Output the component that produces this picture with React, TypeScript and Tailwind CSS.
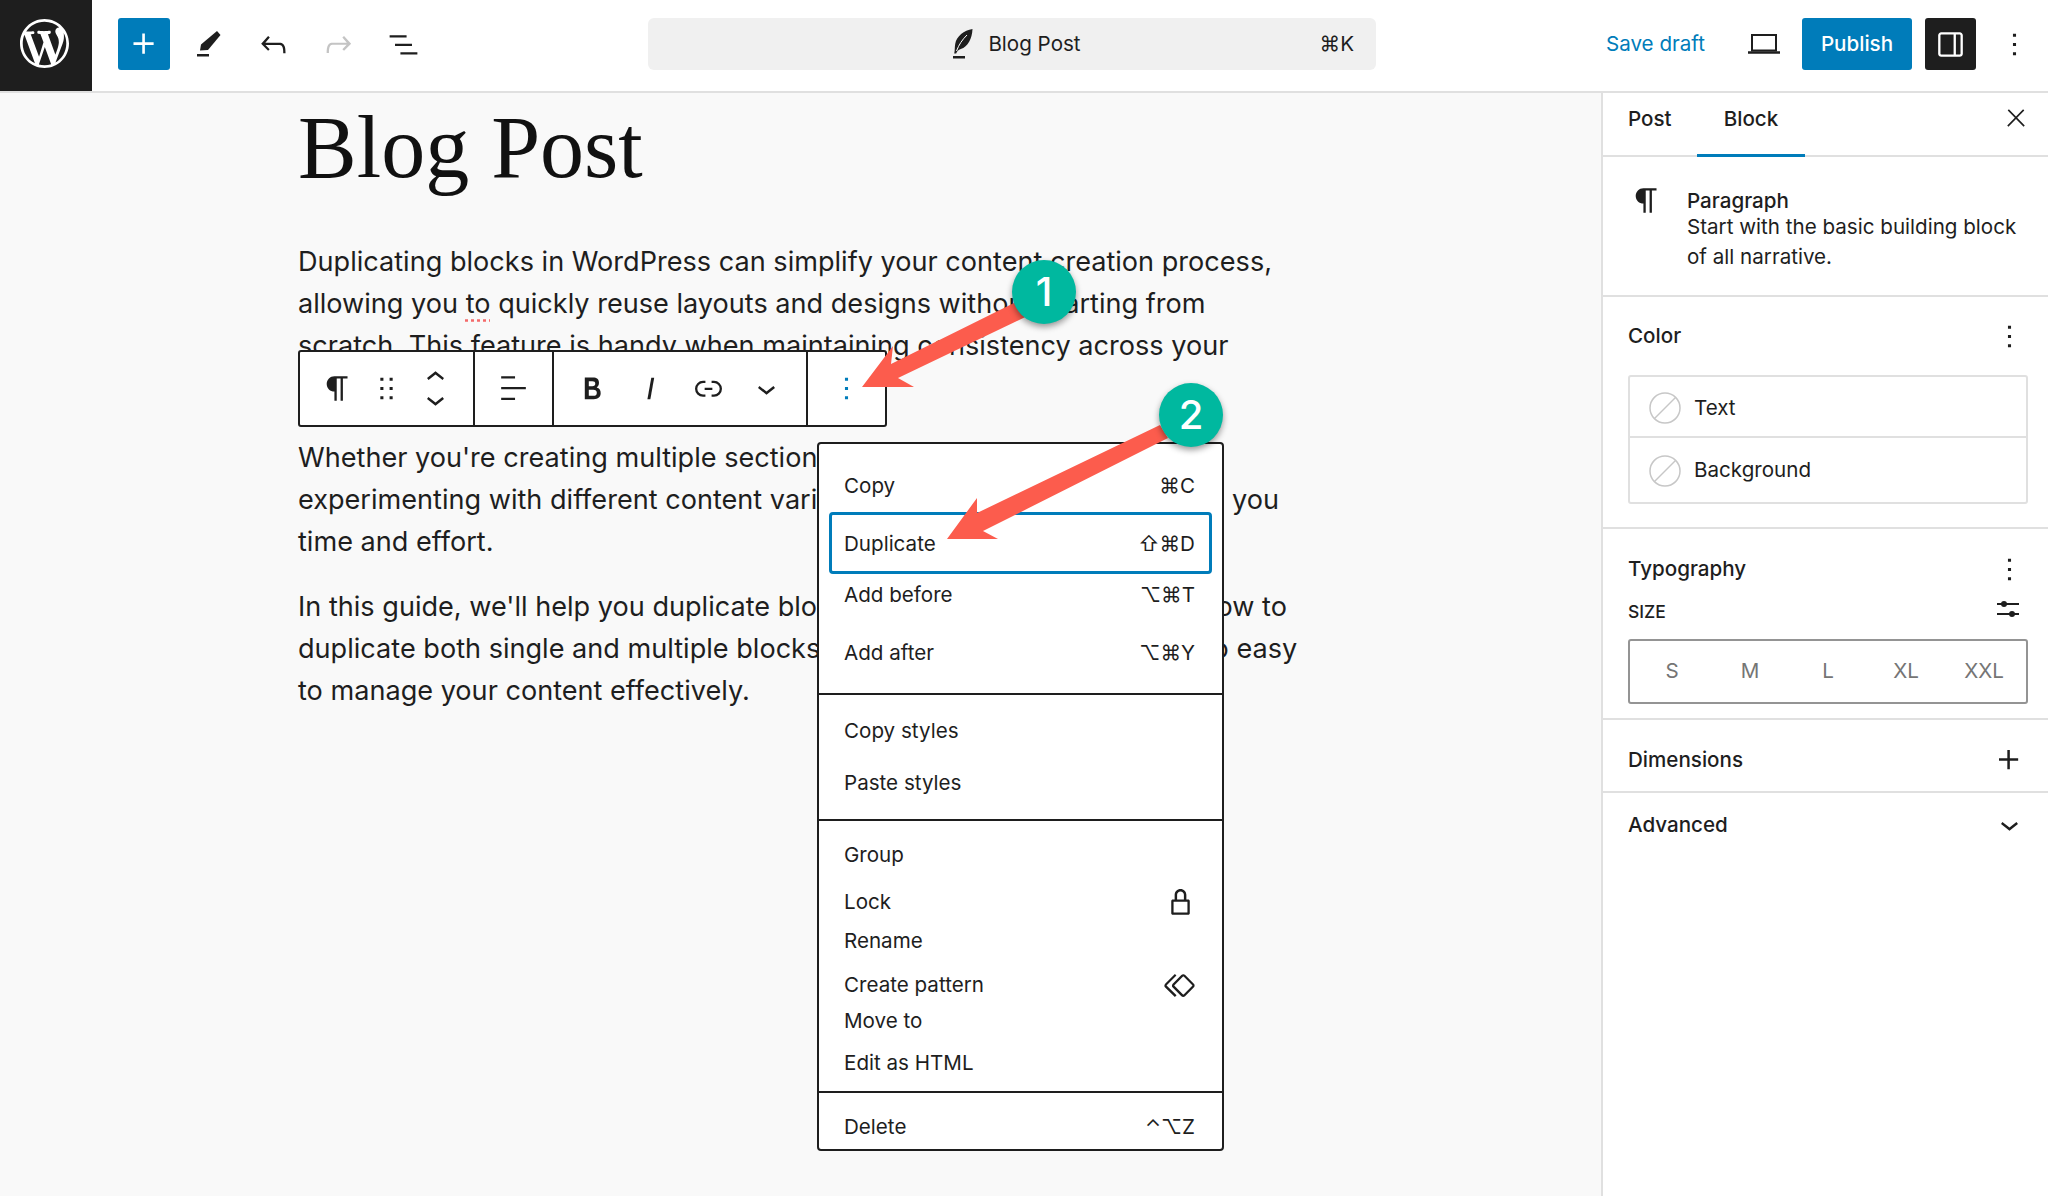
import type { ReactNode } from 'react';

const paths = {
  wordpress:
    'M20 10c0-5.51-4.49-10-10-10C4.48 0 0 4.49 0 10c0 5.52 4.48 10 10 10 5.51 0 10-4.48 10-10zM7.78 15.37L4.37 6.22c.55-.02 1.17-.08 1.17-.08.5-.06.44-1.13-.06-1.11 0 0-1.45.11-2.37.11-.18 0-.37 0-.58-.01C4.12 2.69 6.87 1.11 10 1.11c2.33 0 4.45.87 6.05 2.34-.68-.11-1.65.39-1.65 1.58 0 .74.45 1.36.9 2.1.35.61.55 1.36.55 2.46 0 1.49-1.4 5-1.4 5l-3.03-8.37c.54-.02.82-.17.82-.17.5-.05.44-1.25-.06-1.22 0 0-1.44.12-2.38.12-.87 0-2.33-.12-2.33-.12-.5-.03-.56 1.2-.06 1.22l.92.08 1.26 3.41zM17.41 10c.24-.64.74-1.87.43-4.25.7 1.29 1.05 2.71 1.05 4.25 0 3.29-1.73 6.24-4.4 7.78.97-2.59 1.94-5.2 2.92-7.78zM6.1 18.09C3.12 16.65 1.11 13.53 1.11 10c0-1.3.23-2.48.72-3.59C3.25 10.3 4.67 14.2 6.1 18.09zm4.03-6.63l2.58 6.98c-.86.29-1.76.45-2.71.45-.79 0-1.57-.11-2.29-.33.81-2.38 1.62-4.74 2.42-7.1z',
  plus: 'M11 12.5V17.5H12.5V12.5H17.5V11H12.5V6H11V11H6V12.5H11Z',
  undo: 'M18.3 11.7c-.6-.6-1.4-.9-2.3-.9H6.7l2.9-3.3-1.1-1-4.5 5L8.5 16l1-1-2.7-2.7H16c.5 0 .9.2 1.3.5 1 1 1 3.4 1 4.5v.3h1.5v-.2c0-1.5 0-4.3-1.5-5.7z',
  redo: 'M15.6 6.5l-1.1 1 2.9 3.3H8c-.9 0-1.7.3-2.3.9-1.4 1.5-1.4 4.2-1.4 5.6v.2h1.5v-.3c0-1.1 0-3.5 1-4.5.3-.3.7-.5 1.3-.5h9.2L14.5 15l1.1 1.1 4.6-4.6-4.6-5z',
  list: 'M3 6h11v1.5H3V6Zm3.5 5.5h11V13h-11v-1.5ZM21 17H10v1.5h11V17Z',
  more: 'M13 19h-2v-2h2v2zm0-6h-2v-2h2v2zm0-6h-2V5h2v2z',
  drawer:
    'M18 4H6c-1.1 0-2 .9-2 2v12c0 1.1.9 2 2 2h12c1.1 0 2-.9 2-2V6c0-1.1-.9-2-2-2zm-4 14.5H6c-.3 0-.5-.2-.5-.5V6c0-.3.2-.5.5-.5h8v13zm4.5-.5c0 .3-.2.5-.5.5h-2.5v-13H18c.3 0 .5.2.5.5v12z',
  paragraph:
    'm9.99609 14v-.2251l.00391.0001v6.225h1.5v-14.5h2.5v14.5h1.5v-14.5h3v-1.5h-8.50391c-2.76142 0-5 2.23858-5 5 0 2.7614 2.23858 5 5 5z',
  drag: 'M8 7h2V5H8v2zm0 6h2v-2H8v2zm0 6h2v-2H8v2zm6-14v2h2V5h-2zm0 8h2v-2h-2v2zm0 6h2v-2h-2v2z',
  chevronUp: 'M6.5 12.4L12 8l5.5 4.4-.9 1.2L12 10l-4.5 3.6-1-1.2z',
  chevronDown: 'M17.5 11.6L12 16l-5.5-4.4.9-1.2L12 14l4.5-3.6 1 1.2z',
  align: 'M13 5.5H4V4h9v1.5Zm7 7H4V11h16v1.5Zm-7 7H4V18h9v1.5Z',
  bold: 'M14.7 11.3c1-.6 1.5-1.6 1.5-3 0-2.3-1.3-3.4-4-3.4H7v14h5.8c1.4 0 2.5-.3 3.3-1 .8-.7 1.2-1.7 1.2-2.9.1-1.9-.8-3.1-2.6-3.7zm-5.1-4h2.3c.6 0 1.1.1 1.4.4.3.3.5.7.5 1.2s-.2 1-.5 1.2c-.3.3-.8.4-1.4.4H9.6V7.3zm4.6 9c-.4.3-1 .4-1.7.4H9.6v-3.9h2.9c.7 0 1.3.2 1.7.5.4.3.6.8.6 1.5s-.2 1.2-.6 1.5z',
  italic: 'M12.5 5L10 19h1.9l2.5-14z',
  link: 'M10 17.389H8.444A5.194 5.194 0 1 1 8.444 7H10v1.5H8.444a3.694 3.694 0 0 0 0 7.389H10v1.5ZM14 7h1.556a5.194 5.194 0 0 1 0 10.39H14v-1.5h1.556a3.694 3.694 0 0 0 0-7.39H14V7Zm-4.5 6h5v-1.5h-5V13Z',
  close:
    'M13 11.8l6.1-6.3-1-1-6.1 6.2-6.1-6.2-1 1 6.1 6.3-6.5 6.7 1 1 6.5-6.6 6.5 6.6 1-1z',
  lock: 'M17 10h-1.2V7c0-2.1-1.7-3.8-3.8-3.8-2.1 0-3.8 1.7-3.8 3.8v3H7c-.6 0-1 .4-1 1v8c0 .6.4 1 1 1h10c.6 0 1-.4 1-1v-8c0-.6-.4-1-1-1zM9.8 7c0-1.2 1-2.2 2.2-2.2 1.2 0 2.2 1 2.2 2.2v3H9.8V7zm6.7 11.5h-9v-7h9v7z',
  symbol:
    'M21.3 10.8l-5.6-5.6c-.7-.7-1.8-.7-2.5 0l-5.6 5.6c-.7.7-.7 1.8 0 2.5l5.6 5.6c.3.3.8.5 1.2.5s.9-.2 1.2-.5l5.6-5.6c.8-.7.8-1.9.1-2.5zm-1 1.4l-5.6 5.6c-.1.1-.3.1-.4 0l-5.6-5.6c-.1-.1-.1-.3 0-.4l5.6-5.6s.1-.1.2-.1.1 0 .2.1l5.6 5.6c.1.1.1.3 0 .4zm-16.6-.4L10 5.5l-1-1-6.3 6.3c-.7.7-.7 1.8 0 2.5L9 19.5l1.1-1.1-6.3-6.3c-.2 0-.2-.2-.1-.3z',
};

function Icon({ d, className = '' }: { d: string; className?: string }) {
  return (
    <svg viewBox="0 0 24 24" fill="currentColor" className={`w-[37px] h-[37px] shrink-0 ${className}`}>
      <path d={d} />
    </svg>
  );
}

function BarIcon({ d, className = '' }: { d: string; className?: string }) {
  return (
    <div className={`ml-[6px] w-[59px] h-[52px] flex items-center justify-center ${className}`}>
      <Icon d={d} />
    </div>
  );
}

function TopBar() {
  return (
    <header className="h-[93px] flex items-center bg-white border-b-2 border-[#e0e0e0] pb-[3px] shrink-0">
      <div className="w-[92px] h-[91px] -mb-[3px] pb-[5px] pr-[4px] bg-[#1e1e1e] flex items-center justify-center shrink-0">
        <svg viewBox="0 0 20 20" fill="white" className="w-[49px] h-[49px]">
          <path d={paths.wordpress} />
        </svg>
      </div>
      <button className="ml-[26px] w-[52px] h-[52px] bg-[#007cba] rounded-[3px] text-white flex items-center justify-center shrink-0">
        <Icon d={paths.plus} className="!w-[42px] !h-[42px]" />
      </button>
      <div className="ml-[9px] w-[59px] h-[52px] flex items-center justify-center text-[#1e1e1e]">
        <svg viewBox="0 0 24 26" fill="currentColor" className="w-[24px] h-[26px]">
          <path d="M20 0l3.5 4L11 19l-8 .5L4 13.5z" />
          <rect x="0" y="23" width="12" height="2.5" />
        </svg>
      </div>
      <BarIcon d={paths.undo} className="text-[#1e1e1e]" />
      <BarIcon d={paths.redo} className="text-[#c4c4c4]" />
      <BarIcon d={paths.list} className="text-[#1e1e1e]" />
      <div className="ml-[215px] w-[728px] h-[52px] rounded-[6px] bg-[#f0f0f0] flex items-center text-[20.6px] text-[#1e1e1e] relative shrink-0">
        <div className="flex-1 flex items-center justify-center gap-[15px] pl-[9px]">
          <svg viewBox="0 0 21 30" fill="currentColor" className="w-[21px] h-[30px]">
            <path d="M20.5 0C12 1.5 4.5 7 3.2 15c-.6 3.7-.2 6.5-1 9.5h2c.8-2.2 2-3.4 4.6-4.4C16 17.5 20 10 20.5 0z" />
            <path d="M4.5 22C7 15.5 10 11 15 6" stroke="white" strokeWidth="1" fill="none" />
            <rect x="1" y="27" width="12" height="2.5" />
          </svg>
          <span>Blog Post</span>
        </div>
        <span className="absolute right-[22px]">⌘K</span>
      </div>
      <div className="ml-auto flex items-center pr-[15px]">
        <span className="text-[20.6px] text-[#007cba] mr-[43px]">Save draft</span>
        <svg viewBox="0 0 32 20" fill="none" stroke="#1e1e1e" className="w-[32px] h-[20px] mr-[22px]">
          <rect x="4" y="1" width="24" height="15.5" strokeWidth="2" />
          <path d="M0 18.5h32" strokeWidth="2.5" />
        </svg>
        <button className="w-[110px] h-[52px] bg-[#007cba] text-white text-[20.6px] font-medium rounded-[3px] mr-[13px]">
          Publish
        </button>
        <div className="w-[51px] h-[52px] bg-[#1e1e1e] text-white rounded-[3px] flex items-center justify-center mr-[20px]">
          <Icon d={paths.drawer} />
        </div>
        <Icon d={paths.more} className="text-[#1e1e1e]" />
      </div>
    </header>
  );
}

function Canvas() {
  return (
    <main className="flex-1 bg-[#f9f9f9] pl-[298px] pt-[11px] text-[#1e1e1e] overflow-hidden">
      <h1 className="text-[88px] leading-[88px] font-normal font-['Liberation_Serif',serif] text-[#111]">
        Blog Post
      </h1>
      <div className="mt-[49px] text-[27.1px] leading-[42px] whitespace-nowrap">
        <p>
          Duplicating blocks in WordPress can simplify your content creation process,
          <br />
          allowing you <span className="underline decoration-dotted decoration-[#f46a6a] underline-offset-[6px]">to</span> quickly reuse layouts and designs without starting from
          <br />
          scratch. This feature is handy when maintaining consistency across your
          <br />
          website.
        </p>
        <p className="mt-[28px]">
          Whether you're creating multiple sections of a page or
          <br />
          experimenting with different content variations, duplicating blocks saves you
          <br />
          time and effort.
        </p>
        <p className="mt-[23px]">
          In this guide, we'll help you duplicate blocks in WordPress and explain how to
          <br />
          duplicate both single and multiple blocks, with simple tips that make it so easy
          <br />
          to manage your content effectively.
        </p>
      </div>
    </main>
  );
}

function Toolbar() {
  return (
    <div className="absolute left-[298px] top-[350px] w-[589px] h-[77px] bg-white border-2 border-[#1e1e1e] rounded-[3px] flex items-center text-[#1e1e1e]">
      <div className="h-full w-[175px] flex items-center pl-[19px] gap-[12px] border-r-2 border-[#1e1e1e]">
        <Icon d={paths.paragraph} />
        <Icon d={paths.drag} />
        <div className="flex flex-col">
          <Icon d={paths.chevronUp} />
          <Icon d={paths.chevronDown} className="-mt-[15px]" />
        </div>
      </div>
      <div className="h-full w-[79px] flex items-center justify-center border-r-2 border-[#1e1e1e]">
        <Icon d={paths.align} />
      </div>
      <div className="h-full w-[254px] flex items-center pl-[20px] gap-[21px] border-r-2 border-[#1e1e1e]">
        <Icon d={paths.bold} />
        <Icon d={paths.italic} />
        <Icon d={paths.link} />
        <Icon d={paths.chevronDown} />
      </div>
      <div className="h-full flex-1 flex items-center justify-center text-[#007cba]">
        <Icon d={paths.more} />
      </div>
    </div>
  );
}

function MenuRow({ label, right, className = '' }: { label: string; right?: ReactNode; className?: string }) {
  return (
    <div className={`flex items-center justify-between pl-[25px] pr-[27px] h-[42px] ${className}`}>
      <span>{label}</span>
      {right}
    </div>
  );
}

function BlockMenu() {
  return (
    <div className="absolute left-[817px] top-[442px] w-[407px] h-[709px] bg-white border-2 border-[#1e1e1e] rounded-[4px] text-[20.6px] text-[#1e1e1e] font-['Inter','DejaVu_Sans',sans-serif]">
      <div className="h-[251px] pt-[21px] border-b-2 border-[#1e1e1e]">
        <MenuRow label="Copy" right="⌘C" />
        <div className="mx-[10px] mt-[5px] h-[62px] pt-[2px] rounded-[4px] border-[3px] border-[#007cba] flex items-center justify-between pl-[12px] pr-[14px]">
          <span>Duplicate</span>
          <span>⇧⌘D</span>
        </div>
        <MenuRow label="Add before" right="⌥⌘T" />
        <MenuRow label="Add after" right="⌥⌘Y" className="mt-[16px]" />
      </div>
      <div className="h-[126px] border-b-2 border-[#1e1e1e] pt-[15px]">
        <MenuRow label="Copy styles" />
        <MenuRow label="Paste styles" className="mt-[10px]" />
      </div>
      <div className="h-[272px] border-b-2 border-[#1e1e1e] pt-[13px]">
        <MenuRow label="Group" />
        <MenuRow label="Lock" right={<Icon d={paths.lock} className="-mr-[4px]" />} className="mt-[5px]" />
        <MenuRow label="Rename" className="-mt-[3px]" />
        <MenuRow label="Create pattern" right={<Icon d={paths.symbol} className="-mr-[3px]" />} className="mt-[2px]" />
        <MenuRow label="Move to" className="-mt-[6px]" />
        <MenuRow label="Edit as HTML" />
      </div>
      <div className="pt-[13px]">
        <MenuRow label="Delete" right="⌃⌥Z" />
      </div>
    </div>
  );
}

function SectionHead({ title, icon }: { title: string; icon: ReactNode }) {
  return (
    <div className="flex items-center justify-between font-medium pl-[25px] pr-[20px] h-[37px]">
      <span>{title}</span>
      {icon}
    </div>
  );
}

function Swatch() {
  return (
    <svg viewBox="0 0 32 32" fill="none" stroke="#c7c7c7" strokeWidth="1.5" className="w-[32px] h-[32px]">
      <circle cx="16" cy="16" r="15" />
      <path d="M5.5 26.5l21-21" />
    </svg>
  );
}

function Sidebar() {
  return (
    <aside className="w-[447px] shrink-0 bg-white border-l-2 border-[#e0e0e0] text-[20.6px] text-[#1e1e1e]">
      <div className="h-[64px] flex items-stretch border-b-2 border-[#e0e0e0] font-medium relative">
        <div className="pl-[25px] w-[94px] pb-[10px] flex items-center">Post</div>
        <div className="w-[108px] -mb-[2px] pb-[8px] flex items-center justify-center border-b-[3px] border-[#007cba]">Block</div>
        <Icon d={paths.close} className="absolute right-[18px] top-[11px] !w-[28px] !h-[28px]" />
      </div>
      <div className="h-[140px] border-b-2 border-[#e0e0e0] flex pl-[25px] pt-[25px]">
        <Icon d={paths.paragraph} />
        <div className="ml-[22px] pt-[7px] leading-[30px] w-[340px]">
          <div className="font-medium leading-[23px]">Paragraph</div>
          <div>Start with the basic building block of all narrative.</div>
        </div>
      </div>
      <div className="h-[232px] border-b-2 border-[#e0e0e0] pt-[21px]">
        <SectionHead title="Color" icon={<Icon d={paths.more} />} />
        <div className="ml-[25px] mr-[20px] mt-[20px] border-2 border-[#e0e0e0] rounded-[3px] h-[129px]">
          <div className="h-[61px] flex items-center pl-[19px] pt-[3px] gap-[13px] border-b-2 border-[#e0e0e0]">
            <Swatch />
            <span>Text</span>
          </div>
          <div className="h-[61px] flex items-center pl-[19px] pt-[4px] gap-[13px]">
            <Swatch />
            <span>Background</span>
          </div>
        </div>
      </div>
      <div className="h-[191px] border-b-2 border-[#e0e0e0] pt-[22px]">
        <SectionHead title="Typography" icon={<Icon d={paths.more} />} />
        <div className="flex items-center justify-between pl-[25px] pr-[28px] mt-[12px] h-[24px]">
          <span className="text-[17.5px] font-medium">SIZE</span>
          <svg viewBox="0 0 24 16" fill="currentColor" className="w-[24px] h-[16px] -mt-[6px]">
            <rect x="1" y="2" width="22" height="2" />
            <circle cx="8" cy="3" r="3" />
            <rect x="1" y="12" width="22" height="2" />
            <circle cx="16" cy="13" r="3" />
          </svg>
        </div>
        <div className="ml-[25px] mr-[20px] mt-[15px] h-[65px] border-2 border-[#949494] rounded-[3px] grid grid-cols-5 px-[3px] text-[#757575] items-center text-center">
          <span>S</span>
          <span>M</span>
          <span>L</span>
          <span>XL</span>
          <span>XXL</span>
        </div>
      </div>
      <div className="h-[73px] border-b-2 border-[#e0e0e0] pt-[9px] flex items-center">
        <div className="flex-1">
          <SectionHead title="Dimensions" icon={<Icon d={paths.plus} className="!w-[40px] !h-[40px] -mr-[1px]" />} />
        </div>
      </div>
      <div className="h-[65px] flex items-center">
        <div className="flex-1">
          <SectionHead title="Advanced" icon={<Icon d={paths.chevronDown} className="-mt-[2px]" />} />
        </div>
      </div>
    </aside>
  );
}

function Badge({ n, className }: { n: string; className: string }) {
  return (
    <div className={`absolute w-[64px] h-[64px] rounded-full bg-[#00b89f] text-white text-[40px] font-medium flex items-center justify-center shadow-[0_3px_6px_rgba(0,0,0,0.4)] ${className}`}>
      {n}
    </div>
  );
}

export default function App() {
  return (
    <div className="relative w-[2048px] h-[1196px] overflow-hidden flex flex-col bg-white font-['Inter',sans-serif]">
      <TopBar />
      <div className="flex flex-1 min-h-0">
        <Canvas />
        <Sidebar />
      </div>
      <Toolbar />
      <BlockMenu />
      <svg viewBox="0 0 2048 1196" fill="#fc5c4d" className="absolute inset-0 w-[2048px] h-[1196px] pointer-events-none">
        <polygon points="862,387 893,346 891,364 1030,295 1040,310 898,378 914,387" />
        <polygon points="947,539 977,498 977,513 1160,425 1168,438 983,531 998,539" />
      </svg>
      <Badge n="1" className="left-[1012px] top-[260px]" />
      <Badge n="2" className="left-[1159px] top-[383px]" />
    </div>
  );
}
